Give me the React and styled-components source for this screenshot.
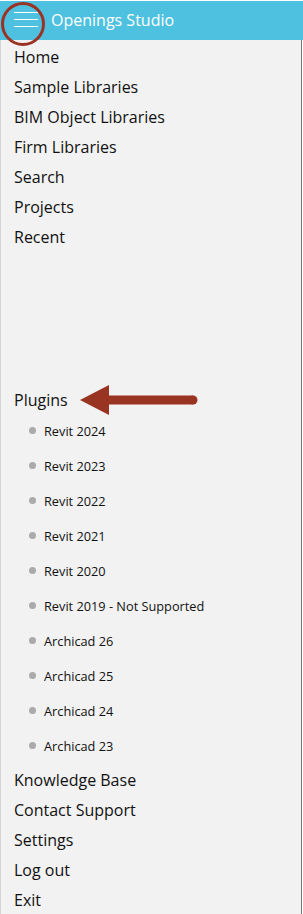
import React from "react";
import styled, { createGlobalStyle } from "styled-components";

const GlobalStyle = createGlobalStyle`
  body {
    margin: 0;
    background: #fff;
    font-family: "Open Sans", "Noto Sans", sans-serif;
  }
`;

const Page = styled.div`
  width: 303px;
  padding-top: 1px;
`;

const Header = styled.header`
  position: relative;
  height: 39px;
  background: #4dc1df;
  display: flex;
  align-items: center;
  gap: 13px;
  padding-left: 14px;
`;

const Burger = styled.div`
  width: 24px;
  display: flex;
  flex-direction: column;
  gap: 6px;
  margin-top: -2px;
  span {
    display: block;
    height: 1px;
    background: #fff;
  }
`;

const Title = styled.div`
  color: #fff;
  font-size: 16px;
  margin-top: -2px;
`;

const Ring = styled.div`
  position: absolute;
  left: 1px;
  top: 1px;
  width: 44px;
  height: 44px;
  box-sizing: border-box;
  border: 3.5px solid #9a3324;
  border-radius: 50%;
  pointer-events: none;
`;

const Nav = styled.nav`
  width: 302px;
  box-sizing: border-box;
  background: #f2f2f2;
  border-left: 1px solid #d4d4d4;
  border-right: 1px solid #777;
  padding: 2px 0 0 13px;
`;

const Item = styled.div`
  position: relative;
  height: 30px;
  line-height: 30px;
  font-size: 16px;
  color: #111;
  margin-top: ${(p) => (p.$gap ? p.$gap : 0)}px;
`;

const SubList = styled.div`
  padding-left: 15px;
`;

const SubItem = styled.div`
  height: 35px;
  box-sizing: border-box;
  padding-bottom: 3px;
  display: flex;
  align-items: center;
  gap: 8px;
  font-size: 12.75px;
  color: #111;
  &::before {
    content: "";
    width: 7px;
    height: 7px;
    border-radius: 50%;
    background: #aaa;
    margin-top: -2px;
  }
`;

const Arrow = styled.svg`
  position: absolute;
  left: 66px;
  top: 0;
`;

const topItems = [
  "Home",
  "Sample Libraries",
  "BIM Object Libraries",
  "Firm Libraries",
  "Search",
  "Projects",
  "Recent",
];

const plugins = [
  "Revit 2024",
  "Revit 2023",
  "Revit 2022",
  "Revit 2021",
  "Revit 2020",
  "Revit 2019 - Not Supported",
  "Archicad 26",
  "Archicad 25",
  "Archicad 24",
  "Archicad 23",
];

const bottomItems = ["Knowledge Base", "Contact Support", "Settings", "Log out", "Exit"];

const App = () => (
  <>
    <GlobalStyle />
    <Page>
      <Header>
        <Burger>
          <span />
          <span />
          <span />
        </Burger>
        <Title>Openings Studio</Title>
        <Ring />
      </Header>
      <Nav>
        {topItems.map((label) => (
          <Item key={label}>{label}</Item>
        ))}
        <Item $gap={133}>
          Plugins
          <Arrow width="119" height="30" viewBox="0 0 119 30">
            <path d="M0 15 L29 0 L29 10.5 L113 10.5 L113 19.5 L29 19.5 L29 30 Z" fill="#993322" />
            <circle cx="113" cy="15" r="4.5" fill="#993322" />
          </Arrow>
        </Item>
        <SubList>
          {plugins.map((label) => (
            <SubItem key={label}>{label}</SubItem>
          ))}
        </SubList>
        {bottomItems.map((label) => (
          <Item key={label}>{label}</Item>
        ))}
      </Nav>
    </Page>
  </>
);

export default App;
